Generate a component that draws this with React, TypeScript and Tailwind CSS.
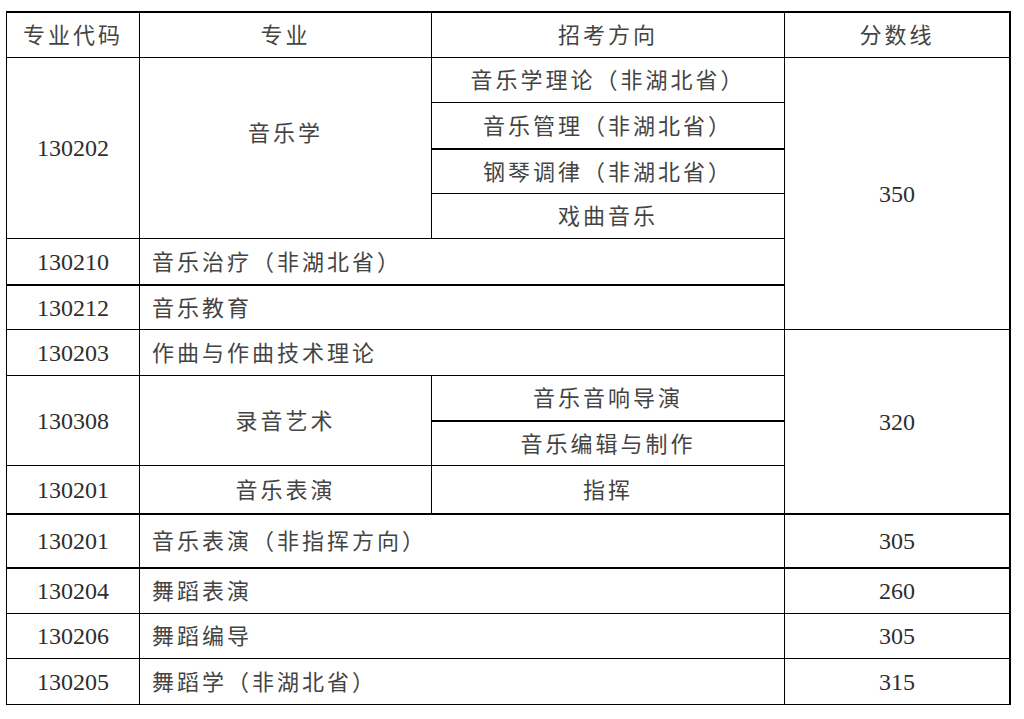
type Cell = {
  text: string;
  cls: string;
  num?: boolean;
  left?: boolean;
};

const cjk = "font-['Noto_Sans_CJK_SC',sans-serif] text-[22px] tracking-[3px] pb-[4px]";
const num = "font-['Liberation_Serif',serif] text-[24px]";

const cells: Cell[] = [
  { text: '专业代码', cls: 'col-start-1 row-start-1' },
  { text: '专业', cls: 'col-start-2 row-start-1' },
  { text: '招考方向', cls: 'col-start-3 row-start-1' },
  { text: '分数线', cls: 'col-start-4 row-start-1' },

  { text: '130202', num: true, cls: 'col-start-1 row-start-2 row-span-4' },
  { text: '音乐学', cls: 'col-start-2 row-start-2 row-span-4 !pb-[35px]' },
  { text: '音乐学理论（非湖北省）', cls: 'col-start-3 row-start-2' },
  { text: '音乐管理（非湖北省）', cls: 'col-start-3 row-start-3 border-b-2' },
  { text: '钢琴调律（非湖北省）', cls: 'col-start-3 row-start-4' },
  { text: '戏曲音乐', cls: 'col-start-3 row-start-5' },
  { text: '350', num: true, cls: 'col-start-4 row-start-2 row-span-6' },

  { text: '130210', num: true, cls: 'col-start-1 row-start-6 border-b-2' },
  { text: '音乐治疗（非湖北省）', left: true, cls: 'col-start-2 col-span-2 row-start-6 border-b-2' },
  { text: '130212', num: true, cls: 'col-start-1 row-start-7' },
  { text: '音乐教育', left: true, cls: 'col-start-2 col-span-2 row-start-7' },

  { text: '130203', num: true, cls: 'col-start-1 row-start-8' },
  { text: '作曲与作曲技术理论', left: true, cls: 'col-start-2 col-span-2 row-start-8' },
  { text: '130308', num: true, cls: 'col-start-1 row-start-9 row-span-2' },
  { text: '录音艺术', cls: 'col-start-2 row-start-9 row-span-2' },
  { text: '音乐音响导演', cls: 'col-start-3 row-start-9 border-b-2' },
  { text: '音乐编辑与制作', cls: 'col-start-3 row-start-10' },
  { text: '130201', num: true, cls: 'col-start-1 row-start-11 border-b-2' },
  { text: '音乐表演', cls: 'col-start-2 row-start-11 border-b-2' },
  { text: '指挥', cls: 'col-start-3 row-start-11 border-b-2' },
  { text: '320', num: true, cls: 'col-start-4 row-start-8 row-span-4 border-b-2' },

  { text: '130201', num: true, cls: 'col-start-1 row-start-12 border-b-2' },
  { text: '音乐表演（非指挥方向）', left: true, cls: 'col-start-2 col-span-2 row-start-12 border-b-2' },
  { text: '305', num: true, cls: 'col-start-4 row-start-12 border-b-2' },

  { text: '130204', num: true, cls: 'col-start-1 row-start-13' },
  { text: '舞蹈表演', left: true, cls: 'col-start-2 col-span-2 row-start-13' },
  { text: '260', num: true, cls: 'col-start-4 row-start-13' },

  { text: '130206', num: true, cls: 'col-start-1 row-start-14' },
  { text: '舞蹈编导', left: true, cls: 'col-start-2 col-span-2 row-start-14' },
  { text: '305', num: true, cls: 'col-start-4 row-start-14' },

  { text: '130205', num: true, cls: 'col-start-1 row-start-15' },
  { text: '舞蹈学（非湖北省）', left: true, cls: 'col-start-2 col-span-2 row-start-15' },
  { text: '315', num: true, cls: 'col-start-4 row-start-15' },
];

export default function App() {
  return (
    <div className="min-h-[719px] w-[1024px] bg-white pt-[11px] pl-[6px]">
      <div className="grid w-fit grid-cols-[133px_292px_353px_226px] grid-rows-[45px_45px_47px_44px_45px_47px_44px_46px_46px_44px_49px_54px_45px_45px_46px] border-t-2 border-l border-black">
        {cells.map((c, i) => (
          <div
            key={i}
            className={`flex items-center border-black border-b border-r leading-none ${
              c.left ? 'justify-start pl-3' : 'justify-center'
            } ${c.cls.includes('col-start-4') ? 'border-r-2' : ''} ${
              c.num ? `${num} text-[#2e2e2e]` : `${cjk} text-[#444]`
            } ${c.cls}`}
          >
            <span>{c.text}</span>
          </div>
        ))}
      </div>
    </div>
  );
}
